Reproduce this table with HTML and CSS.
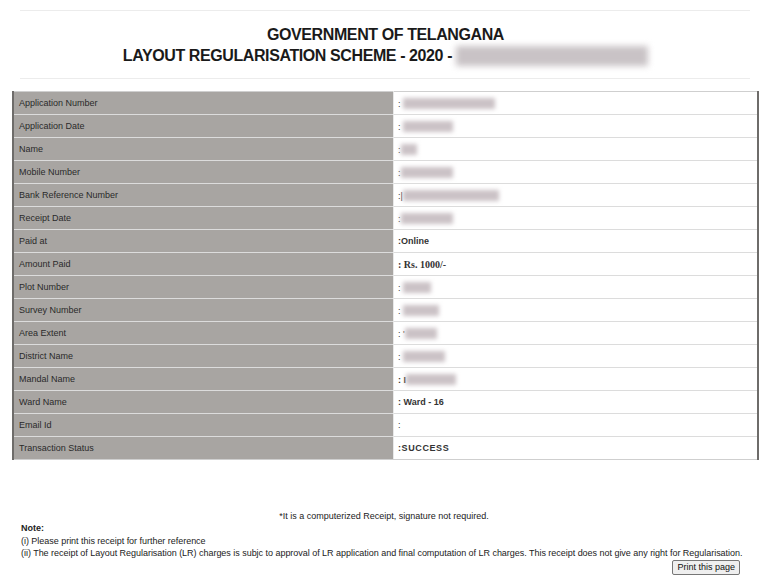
FILE: index.html
```html
<!DOCTYPE html>
<html>
<head>
<meta charset="utf-8">
<link rel="stylesheet" href="styles.css">
</head>
<body>
<div class="page">
  <div class="rule"></div>
  <div class="head">
    <div class="t1">GOVERNMENT OF TELANGANA</div>
    <div class="t2">LAYOUT REGULARISATION SCHEME - 2020 - <span class="blur bt" style="width:192px"></span></div>
  </div>
  <div class="rule rule2"></div>
  <table class="rec">
    <tr><td class="lab">Application Number</td><td class="val">: <span class="blur" style="width:92px"></span></td></tr>
    <tr><td class="lab">Application Date</td><td class="val">: <span class="blur" style="width:50px"></span></td></tr>
    <tr><td class="lab">Name</td><td class="val">:<span class="blur" style="width:16px"></span></td></tr>
    <tr><td class="lab">Mobile Number</td><td class="val">:<span class="blur" style="width:52px"></span></td></tr>
    <tr><td class="lab">Bank Reference Number</td><td class="val">:|<span class="blur" style="width:96px"></span></td></tr>
    <tr><td class="lab">Receipt Date</td><td class="val">:<span class="blur" style="width:52px"></span></td></tr>
    <tr><td class="lab">Paid at</td><td class="val b">:Online</td></tr>
    <tr><td class="lab">Amount Paid</td><td class="val rs">: Rs. 1000/-</td></tr>
    <tr><td class="lab">Plot Number</td><td class="val">: <span class="blur" style="width:28px"></span></td></tr>
    <tr><td class="lab">Survey Number</td><td class="val">: <span class="blur" style="width:36px"></span></td></tr>
    <tr><td class="lab">Area Extent</td><td class="val">: '<span class="blur" style="width:32px"></span></td></tr>
    <tr><td class="lab">District Name</td><td class="val">: <span class="blur" style="width:42px"></span></td></tr>
    <tr><td class="lab">Mandal Name</td><td class="val b">: I<span class="blur" style="width:50px"></span></td></tr>
    <tr><td class="lab">Ward Name</td><td class="val b">: Ward - 16</td></tr>
    <tr><td class="lab">Email Id</td><td class="val">:</td></tr>
    <tr><td class="lab">Transaction Status</td><td class="val b sp">:SUCCESS</td></tr>
  </table>
  <div class="foot">
    <div class="comp">*It is a computerized Receipt, signature not required.</div>
    <div class="note">
      <div class="nt">Note:</div>
      <div>(i) Please print this receipt for further reference</div>
      <div>(ii) The receipt of Layout Regularisation (LR) charges is subjc to approval of LR application and final computation of LR charges. This receipt does not give any right for Regularisation.</div>
    </div>
    <div class="btnrow"><button class="btn">Print this page</button></div>
  </div>
</div>
</body>
</html>
```
FILE: styles.css
```css
html, body {
  margin: 0;
  padding: 0;
  background: #fff;
}
body {
  font-family: "Liberation Sans", Arial, sans-serif;
  color: #222;
}
.page {
  width: 768px;
  padding-top: 10px;
}
.rule {
  margin: 0 18px 0 20px;
  border-top: 1px solid #ececec;
}
.head {
  text-align: center;
  font-weight: bold;
  color: #1a1a1a;
  padding-top: 15px;
  height: 52px;
}
.t1 {
  font-size: 16px;
  line-height: 18px;
  letter-spacing: -0.4px;
  padding-left: 3px;
}
.t2 {
  font-size: 16px;
  line-height: 24px;
  letter-spacing: -0.4px;
  padding-left: 3px;
}
.blur {
  display: inline-block;
  height: 11px;
  background: #cbc2c6;
  filter: blur(2px);
  vertical-align: -2px;
}
.blur.bt {
  height: 20px;
  vertical-align: -5px;
  background: #c9c3c6;
  filter: blur(3px);
}
.rule2 {
  margin-bottom: 12px;
}
.rec {
  margin-left: 12px;
  width: 747px;
  border-collapse: collapse;
  font-size: 9px;
  border-left: 2px solid #6e6c6a;
  border-right: 2px solid #6e6c6a;
}
.rec td {
  height: 22px;
  padding: 0 0 0 5px;
  border-top: 1px solid #dcdcdc;
  vertical-align: middle;
}
.rec tr:first-child td {
  border-top: 1px solid #cfcfcf;
}
.rec tr:last-child td {
  border-bottom: 1px solid #cfcfcf;
}
.lab {
  width: 374px;
  background: #a8a5a2;
  color: #2a2a2a;
  border-right: 1px solid #e8e8e8;
}
.val {
  color: #333;
  padding-left: 4px !important;
}
.b {
  font-weight: bold;
}
.rs {
  font-family: "Liberation Serif", "Times New Roman", serif;
  font-weight: bold;
  font-size: 10px;
}
.sp {
  letter-spacing: 0.6px;
}
.foot {
  padding-top: 50px;
  font-size: 9px;
  color: #222;
}
.comp {
  text-align: center;
  line-height: 12px;
}
.note {
  padding-left: 21px;
  line-height: 12.5px;
  letter-spacing: -0.03px;
}
.nt {
  font-weight: bold;
}
.btnrow {
  display: flex;
  justify-content: flex-end;
  padding-right: 28px;
}
.btn {
  font-family: "Liberation Sans", Arial, sans-serif;
  font-size: 9px;
  padding: 1px 4px;
  height: 15px;
  background: #efefef;
  border: 1px solid #767676;
  border-radius: 2px;
  color: #111;
}
```
